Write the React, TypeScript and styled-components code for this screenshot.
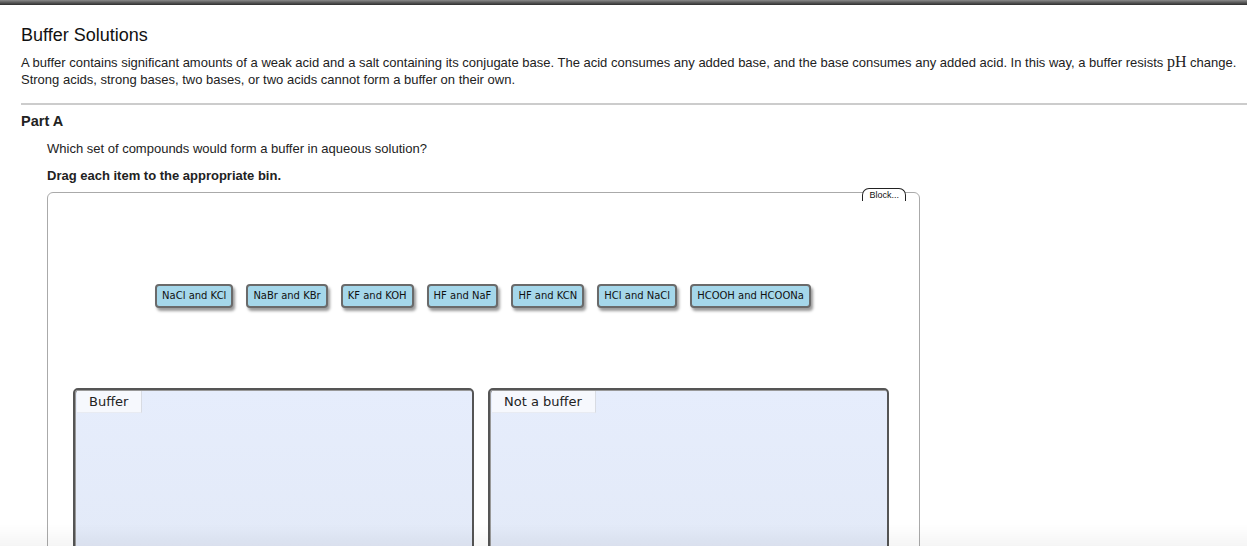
import styled, { createGlobalStyle } from 'styled-components'

const GlobalStyle = createGlobalStyle`
  html, body {
    margin: 0;
    padding: 0;
    background: #fff;
    overflow: hidden;
  }
  body {
    font-family: 'Liberation Sans', Arial, sans-serif;
    color: #222;
  }
`

const TopBar = styled.div`
  height: 5px;
  background: linear-gradient(#8a8a8a, #5a5a5a 50%, #2e2e2e);
`

const Page = styled.div`
  padding: 19px 0 0 21px;
`

const Title = styled.h1`
  margin: 0;
  font-size: 18px;
  line-height: 22px;
  font-weight: normal;
  color: #111;
`

const Intro = styled.p`
  margin: 7px 0 0;
  font-size: 13px;
  line-height: 17px;
  color: #222;
`

const Ph = styled.span`
  font-family: 'Liberation Serif', 'Times New Roman', serif;
  font-size: 16px;
`

const Rule = styled.hr`
  margin: 15px 0 0;
  border: 0;
  height: 2px;
  background: #cccccc;
`

const PartTitle = styled.h2`
  margin: 8px 0 0;
  font-size: 14.5px;
  line-height: 17px;
  font-weight: bold;
  color: #222;
`

const PartBody = styled.div`
  padding-left: 26px;
`

const Question = styled.p<{ bold?: boolean }>`
  margin: 10px 0 0;
  font-size: 13px;
  line-height: 17px;
  font-weight: ${({ bold }) => (bold ? 'bold' : 'normal')};
  color: #222;
`

const DragArea = styled.div`
  position: relative;
  margin-top: 8px;
  width: 873px;
  height: 420px;
  box-sizing: border-box;
  border: 1px solid #aaaaaa;
  border-radius: 6px;
  padding: 91px 30px 0 25px;
`

const BlockTab = styled.div`
  position: absolute;
  top: -5px;
  right: 13px;
  padding: 0 6px;
  height: 12px;
  border: 1px solid #222;
  border-bottom: 0;
  border-radius: 7px 7px 0 0;
  background: #fff;
  font-size: 9px;
  line-height: 12px;
  color: #111;
`

const ItemRow = styled.div`
  display: flex;
  justify-content: center;
  gap: 13px;
  margin-left: 4px;
`

const Item = styled.div`
  height: 24px;
  box-sizing: border-box;
  padding: 0 5px;
  border: 2px solid #6a6a6a;
  border-radius: 4px;
  background: #a5d7ea;
  box-shadow: 2px 3px 3px rgba(0, 0, 0, 0.4);
  font-family: 'DejaVu Sans', Verdana, sans-serif;
  font-size: 10px;
  line-height: 20px;
  color: #111;
  white-space: nowrap;
`

const Bins = styled.div`
  display: flex;
  gap: 14px;
  margin-top: 80px;
`

const Bin = styled.div`
  flex: 1;
  height: 220px;
  border: 2px solid #555;
  border-radius: 5px;
  background: linear-gradient(#e6edfc, #e3eaf8 70%, #dde5f3);
  box-shadow: inset 1px 1px 0 #999;
`

const BinLabel = styled.div`
  display: inline-block;
  margin: 1px 0 0 2px;
  padding: 1px 13px 0 12px;
  height: 20px;
  background: #f6f8fd;
  border-right: 1px solid #d8dbe2;
  border-bottom: 1px solid #e8ebf2;
  font-family: 'DejaVu Sans', Verdana, sans-serif;
  font-size: 13px;
  line-height: 20px;
  color: #222;
`

const BottomShade = styled.div`
  position: fixed;
  left: 0;
  right: 0;
  bottom: 0;
  height: 22px;
  background: linear-gradient(rgba(0, 0, 0, 0), rgba(0, 0, 0, 0.04));
  pointer-events: none;
`

const items = [
  'NaCl and KCl',
  'NaBr and KBr',
  'KF and KOH',
  'HF and NaF',
  'HF and KCN',
  'HCl and NaCl',
  'HCOOH and HCOONa',
]

const bins = ['Buffer', 'Not a buffer']

export default function App() {
  return (
    <>
      <GlobalStyle />
      <TopBar />
      <Page>
        <Title>Buffer Solutions</Title>
        <Intro>
          A buffer contains significant amounts of a weak acid and a salt containing its conjugate base. The acid
          consumes any added base, and the base consumes any added acid. In this way, a buffer resists <Ph>pH</Ph>{' '}
          change.
          <br />
          Strong acids, strong bases, two bases, or two acids cannot form a buffer on their own.
        </Intro>
        <Rule />
        <PartTitle>Part A</PartTitle>
        <PartBody>
          <Question>Which set of compounds would form a buffer in aqueous solution?</Question>
          <Question bold>Drag each item to the appropriate bin.</Question>
          <DragArea>
            <BlockTab>Block...</BlockTab>
            <ItemRow>
              {items.map((item) => (
                <Item key={item}>{item}</Item>
              ))}
            </ItemRow>
            <Bins>
              {bins.map((bin) => (
                <Bin key={bin}>
                  <BinLabel>{bin}</BinLabel>
                </Bin>
              ))}
            </Bins>
          </DragArea>
        </PartBody>
      </Page>
      <BottomShade />
    </>
  )
}
